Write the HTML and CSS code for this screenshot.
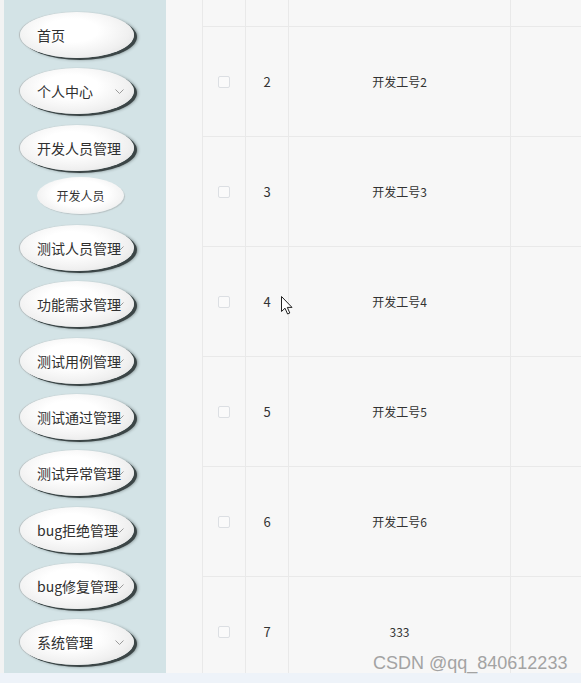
FILE: index.html
```html
<!DOCTYPE html>
<html lang="zh-CN">
<head>
<meta charset="utf-8">
<title>开发人员</title>
<link rel="stylesheet" href="styles.css">
</head>
<body>
<div class="page">
  <div class="main">
    <div class="ghost"></div>
    <nav class="sidebar">
      <div class="item"><span class="label">首页</span></div>
      <div class="item"><span class="label">个人中心</span><svg class="arrow" width="9" height="5" viewBox="0 0 9 5"><polyline points="0.5,0.5 4.5,4.5 8.5,0.5" fill="none" stroke="#9a9a9a" stroke-width="1"/></svg></div>
      <div class="item"><span class="label">开发人员管理</span></div>
      <div class="sub"><span>开发人员</span></div>
      <div class="item"><svg class="arrow" width="9" height="5" viewBox="0 0 9 5"><polyline points="0.5,0.5 4.5,4.5 8.5,0.5" fill="none" stroke="#9a9a9a" stroke-width="1"/></svg><span class="label">测试人员管理</span></div>
      <div class="item"><svg class="arrow" width="9" height="5" viewBox="0 0 9 5"><polyline points="0.5,0.5 4.5,4.5 8.5,0.5" fill="none" stroke="#9a9a9a" stroke-width="1"/></svg><span class="label">功能需求管理</span></div>
      <div class="item"><svg class="arrow" width="9" height="5" viewBox="0 0 9 5"><polyline points="0.5,0.5 4.5,4.5 8.5,0.5" fill="none" stroke="#9a9a9a" stroke-width="1"/></svg><span class="label">测试用例管理</span></div>
      <div class="item"><svg class="arrow" width="9" height="5" viewBox="0 0 9 5"><polyline points="0.5,0.5 4.5,4.5 8.5,0.5" fill="none" stroke="#9a9a9a" stroke-width="1"/></svg><span class="label">测试通过管理</span></div>
      <div class="item"><svg class="arrow" width="9" height="5" viewBox="0 0 9 5"><polyline points="0.5,0.5 4.5,4.5 8.5,0.5" fill="none" stroke="#9a9a9a" stroke-width="1"/></svg><span class="label">测试异常管理</span></div>
      <div class="item"><svg class="arrow" width="9" height="5" viewBox="0 0 9 5"><polyline points="0.5,0.5 4.5,4.5 8.5,0.5" fill="none" stroke="#9a9a9a" stroke-width="1"/></svg><span class="label">bug拒绝管理</span></div>
      <div class="item"><svg class="arrow" width="9" height="5" viewBox="0 0 9 5"><polyline points="0.5,0.5 4.5,4.5 8.5,0.5" fill="none" stroke="#9a9a9a" stroke-width="1"/></svg><span class="label">bug修复管理</span></div>
      <div class="item"><span class="label">系统管理</span><svg class="arrow" width="9" height="5" viewBox="0 0 9 5"><polyline points="0.5,0.5 4.5,4.5 8.5,0.5" fill="none" stroke="#9a9a9a" stroke-width="1"/></svg></div>
    </nav>
    <section class="content">
      <div class="table">
        <div class="cell top"></div><div class="cell top"></div><div class="cell top"></div><div class="cell top last"></div>

        <div class="cell"><span class="check"></span></div><div class="cell num">2</div><div class="cell name">开发工号2</div><div class="cell last"></div>
        <div class="cell"><span class="check"></span></div><div class="cell num">3</div><div class="cell name">开发工号3</div><div class="cell last"></div>
        <div class="cell"><span class="check"></span></div><div class="cell num">4</div><div class="cell name">开发工号4</div><div class="cell last"></div>
        <div class="cell"><span class="check"></span></div><div class="cell num">5</div><div class="cell name">开发工号5</div><div class="cell last"></div>
        <div class="cell"><span class="check"></span></div><div class="cell num">6</div><div class="cell name">开发工号6</div><div class="cell last"></div>
        <div class="cell"><span class="check"></span></div><div class="cell num">7</div><div class="cell name">333</div><div class="cell last"></div>
      </div>
    </section>
  </div>
  <div class="footer"></div>
  <svg class="cursor" width="12" height="19" viewBox="0 0 12 19"><path d="M0.5,0.5 L0.5,15.5 L4,12.2 L6.6,18 L8.8,17 L6.3,11.4 L11,11.4 Z" fill="#fff" stroke="#222" stroke-width="1" stroke-linejoin="round"/></svg>
  <div class="watermark">CSDN @qq_840612233</div>
</div>
</body>
</html>
```
FILE: styles.css
```css
html, body {
  margin: 0;
  padding: 0;
}
body {
  width: 581px;
  height: 683px;
  overflow: hidden;
  font-family: "Noto Sans CJK SC", "Noto Sans", sans-serif;
  color: #333;
}
.page {
  position: relative;
  width: 581px;
  height: 683px;
  display: flex;
  flex-direction: column;
}
.main {
  display: flex;
  height: 673px;
  overflow: hidden;
}
.ghost {
  width: 4px;
  flex: none;
  background: #f2f3f3;
}
.sidebar {
  width: 162px;
  flex: none;
  background: #d3e3e6;
  display: flex;
  flex-direction: column;
  gap: 10.3px;
  padding-top: 12px;
  box-sizing: border-box;
}
.item {
  position: relative;
  width: 114px;
  height: 46px;
  margin-left: 16px;
  flex: none;
  border-radius: 50%;
  background: radial-gradient(ellipse at 45% 40%, #ffffff 30%, #f0f0f0 65%, #d6d6d6 100%);
  box-shadow: 3px 2px 0.5px #3c4647, 4px 2px 3px rgba(40, 50, 52, 0.45), -1px 0 1px #b4b9ba;
  overflow: hidden;
}
.label {
  position: relative;
  display: block;
  padding-left: 17px;
  line-height: 46px;
  font-size: 14px;
  white-space: nowrap;
  color: #303030;
}
.arrow {
  position: absolute;
  left: 95px;
  top: 21px;
}
.sub {
  width: 87px;
  height: 37px;
  margin: -4px 0 1px 33px;
  flex: none;
  border-radius: 50%;
  background: radial-gradient(ellipse at 50% 45%, #ffffff 45%, #f0f0f0 75%, #dedede 100%);
  box-shadow: 1px 1px 1px #b8c2c4;
  display: flex;
  align-items: center;
  justify-content: center;
  font-size: 12px;
  color: #333;
}
.content {
  flex: 1;
  background: #f7f7f7;
  padding-left: 36px;
  overflow: hidden;
}
.table {
  display: grid;
  grid-template-columns: 43px 43px 222px 200px;
  grid-auto-rows: 110px;
  grid-template-rows: 27px;
  border-left: 1px solid #e9e9e9;
}
.cell {
  box-sizing: border-box;
  border-right: 1px solid #e9e9e9;
  border-bottom: 1px solid #e9e9e9;
  display: flex;
  align-items: center;
  justify-content: center;
  font-size: 12px;
  color: #333;
}
.cell.last {
  border-right: none;
}
.num {
  font-size: 13px;
}
.check {
  width: 12px;
  height: 12px;
  box-sizing: border-box;
  border: 1px solid #dcdfe3;
  border-radius: 2px;
  background: #fafafa;
}
.footer {
  height: 10px;
  background: #eef3f9;
}
.cursor {
  position: absolute;
  left: 281px;
  top: 296px;
}
.watermark {
  position: absolute;
  left: 373px;
  top: 653px;
  font-family: "Liberation Sans", Arial, sans-serif;
  font-size: 18px;
  color: #a3a3a3;
  white-space: nowrap;
}
```
